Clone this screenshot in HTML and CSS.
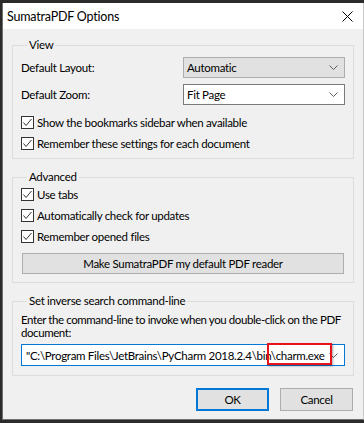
FILE: index.html
```html
<!DOCTYPE html>
<html lang="en">
<head>
  <meta charset="UTF-8">
  <title>SumatraPDF Options</title>
  <link rel="stylesheet" href="styles.css">
</head>
<body>
  <div class="window">
    <div class="titlebar">
      <span class="titlebar__text">SumatraPDF Options</span>
      <svg class="titlebar__close" width="11" height="11" viewBox="0 0 11 11">
        <path d="M0.5 0.5 L10.5 10.5 M10.5 0.5 L0.5 10.5" stroke="#000" stroke-width="1" fill="none"/>
      </svg>
    </div>

    <div class="content">
      <fieldset class="group group--view">
        <legend class="group__label">View</legend>
        <div class="field-row">
          <span class="field-row__label">Default Layout:</span>
          <div class="select select--disabled">
            <span>Automatic</span>
            <svg class="chevron" width="9" height="5" viewBox="0 0 9 5"><path d="M0.5 0.5 L4.5 4.5 L8.5 0.5" stroke="#606060" fill="none"/></svg>
          </div>
        </div>
        <div class="field-row field-row--second">
          <span class="field-row__label">Default Zoom:</span>
          <div class="select">
            <span>Fit Page</span>
            <svg class="chevron" width="9" height="5" viewBox="0 0 9 5"><path d="M0.5 0.5 L4.5 4.5 L8.5 0.5" stroke="#606060" fill="none"/></svg>
          </div>
        </div>
        <div class="check-list check-list--view">
          <div class="check">
            <span class="check__box"><svg width="11" height="11" viewBox="0 0 11 11"><path d="M1.5 5.5 L4 8.5 L9.5 2" stroke="#333" fill="none"/></svg></span>
            <span>Show the bookmarks sidebar when available</span>
          </div>
          <div class="check">
            <span class="check__box"><svg width="11" height="11" viewBox="0 0 11 11"><path d="M1.5 5.5 L4 8.5 L9.5 2" stroke="#333" fill="none"/></svg></span>
            <span>Remember these settings for each document</span>
          </div>
        </div>
      </fieldset>

      <fieldset class="group group--advanced">
        <legend class="group__label">Advanced</legend>
        <div class="check-list">
          <div class="check">
            <span class="check__box"><svg width="11" height="11" viewBox="0 0 11 11"><path d="M1.5 5.5 L4 8.5 L9.5 2" stroke="#333" fill="none"/></svg></span>
            <span>Use tabs</span>
          </div>
          <div class="check">
            <span class="check__box"><svg width="11" height="11" viewBox="0 0 11 11"><path d="M1.5 5.5 L4 8.5 L9.5 2" stroke="#333" fill="none"/></svg></span>
            <span>Automatically check for updates</span>
          </div>
          <div class="check">
            <span class="check__box"><svg width="11" height="11" viewBox="0 0 11 11"><path d="M1.5 5.5 L4 8.5 L9.5 2" stroke="#333" fill="none"/></svg></span>
            <span>Remember opened files</span>
          </div>
        </div>
        <div class="button button--wide">Make SumatraPDF my default PDF reader</div>
      </fieldset>

      <fieldset class="group group--inverse">
        <legend class="group__label">Set inverse search command-line</legend>
        <p class="group__hint">Enter the command-line to invoke when you double-click on the PDF document:</p>
        <div class="combo">
          <span class="combo__text">"C:\Program Files\JetBrains\PyCharm 2018.2.4\bin\charm.exe</span>
          <svg class="chevron" width="9" height="5" viewBox="0 0 9 5"><path d="M0.5 0.5 L4.5 4.5 L8.5 0.5" stroke="#606060" fill="none"/></svg>
          <span class="combo__highlight"></span>
        </div>
      </fieldset>

      <div class="actions">
        <div class="button button--default">OK</div>
        <div class="button">Cancel</div>
      </div>
    </div>
  </div>
</body>
</html>
```

FILE: styles.css
```css
html, body {
  margin: 0;
  overflow: hidden;
}

body {
  background: #2b2b2b;
  font-family: Lato, "Liberation Sans", sans-serif;
  font-size: 11.5px;
  letter-spacing: -0.3px;
  color: #000;
  padding: 3px 1px 3px 2px;
}

.window {
  width: 360px;
  height: 416px;
  background: #f0f0f0;
  border: 1px solid #707070;
  border-top: 0;
  border-right-color: #c8c8c8;
}

.titlebar {
  height: 26px;
  background: #fff;
  display: flex;
  align-items: center;
  justify-content: space-between;
  padding: 0 10px 0 4px;
}

.titlebar__text {
  font-size: 12.5px;
  letter-spacing: -0.2px;
}

.titlebar__close {
  margin-top: 1px;
}

.content {
  padding: 9px 9px 0 9px;
}

/* group boxes */
.group {
  margin: 0 0 11px 0;
  padding: 0 8px;
  border: 1px solid #dcdcdc;
  min-width: 0;
}

.group__label {
  padding: 0 2px;
  margin-left: 6px;
  line-height: 14px;
}

.group--view {
  padding-top: 5px;
  padding-bottom: 4px;
}

.group--advanced {
  padding-top: 0;
  padding-bottom: 8px;
}

.group--inverse {
  padding-top: 5px;
  padding-bottom: 9px;
  margin-bottom: 12px;
}

.field-row {
  display: flex;
  align-items: center;
  height: 21px;
}

.field-row--second {
  margin-top: 6px;
}

.field-row__label {
  flex: 1;
}

.select {
  width: 162px;
  height: 21px;
  box-sizing: border-box;
  border: 1px solid #7a7a7a;
  background: #fff;
  display: flex;
  align-items: center;
  justify-content: space-between;
  padding: 0 6px 0 3px;
}

.select--disabled {
  background: #e1e1e1;
  border-color: #adadad;
}

.chevron {
  display: block;
  flex-shrink: 0;
}

.check-list--view {
  margin-top: 7px;
}

.check {
  display: flex;
  align-items: center;
  height: 21px;
}

.check__box {
  width: 13px;
  height: 13px;
  box-sizing: border-box;
  border: 1px solid #333;
  background: #fff;
  margin-right: 3px;
  display: flex;
}

.button {
  height: 23px;
  box-sizing: border-box;
  background: #e1e1e1;
  border: 1px solid #adadad;
  display: flex;
  align-items: center;
  justify-content: center;
}

.button--wide {
  height: 21px;
  margin: 6px 0 0 1px;
  width: 322px;
}

.group__hint {
  margin: 0;
  line-height: 13px;
  letter-spacing: -0.42px;
}

.combo {
  position: relative;
  margin-top: 5px;
  height: 22px;
  box-sizing: border-box;
  border: 1px solid #0078d7;
  background: #fff;
  display: flex;
  align-items: center;
  padding: 0 6px 0 4px;
}

.combo__text {
  flex: 1;
  white-space: nowrap;
  overflow: hidden;
}

.combo__highlight {
  position: absolute;
  left: 245px;
  top: -2px;
  width: 65px;
  height: 22px;
  box-sizing: border-box;
  border: 2px solid #e8131b;
  box-shadow: 1px 1px 2px rgba(0, 0, 0, 0.35);
}

.actions {
  display: flex;
  justify-content: flex-end;
  gap: 11px;
  padding-right: 1px;
}

.actions .button {
  width: 73px;
}

.button--default {
  border: 2px solid #0078d7;
}
```
